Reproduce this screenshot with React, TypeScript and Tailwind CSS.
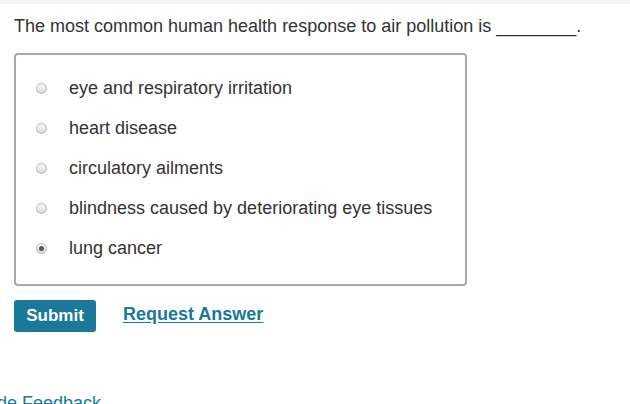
import React, { useState } from "react";

const options = [
  "eye and respiratory irritation",
  "heart disease",
  "circulatory ailments",
  "blindness caused by deteriorating eye tissues",
  "lung cancer",
];

function Radio({ checked }: { checked: boolean }) {
  return (
    <span className="flex h-[11px] w-[11px] items-center justify-center rounded-full border border-[#b5b5b5] bg-gradient-to-b from-[#fafafa] to-[#dcdcdc]">
      {checked && <span className="h-[5px] w-[5px] rounded-full bg-[#555]" />}
    </span>
  );
}

export default function App() {
  const [selected, setSelected] = useState(4);

  return (
    <div
      className="relative h-[404px] w-[630px] overflow-hidden bg-white text-[#333]"
      style={{ fontFamily: '"Liberation Sans", Arial, sans-serif' }}
    >
      <div className="h-[4px] bg-[#f4f4f4]" />
      <div className="px-[14px]">
        <p className="mt-[11px] text-[18px] leading-[22px]">
          The most common human health response to air pollution is ________.
        </p>

        <div className="mt-[16px] w-[453px] rounded-[4px] border-2 border-[#a9a9a9] pt-[13px] pb-[16px]">
          <ul className="flex flex-col">
            {options.map((o, i) => (
              <li
                key={o}
                className="flex h-[40px] cursor-pointer items-center"
                onClick={() => setSelected(i)}
              >
                <span className="ml-[20px] w-[33px]">
                  <Radio checked={selected === i} />
                </span>
                <span className="text-[18px]">{o}</span>
              </li>
            ))}
          </ul>
        </div>

        <div className="mt-[14px] flex items-center gap-[27px]">
          <button className="h-[32px] w-[82px] rounded-[3px] bg-[#1a7898] text-[17px] font-bold text-white">
            Submit
          </button>
          <a href="#" className="pb-[3px] text-[18px] font-bold text-[#1a7898] underline underline-offset-2">
            Request Answer
          </a>
        </div>
      </div>

      <div className="-ml-[3px] mt-[60px] text-[18px] leading-[22px] text-[#1a7898]">de Feedback</div>
    </div>
  );
}
